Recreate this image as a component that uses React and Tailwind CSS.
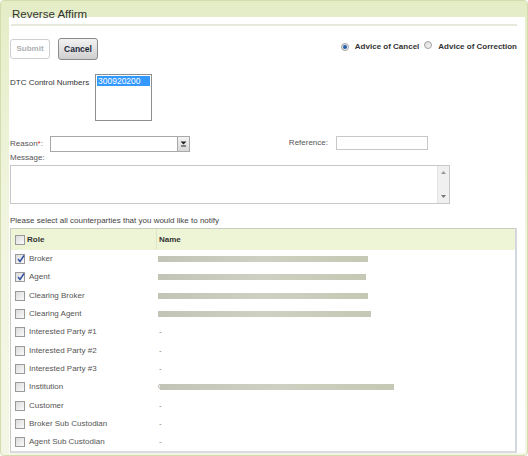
import React from 'react';

const rows = [
  { role: 'Broker', checked: true, bar: 210 },
  { role: 'Agent', checked: true, bar: 208 },
  { role: 'Clearing Broker', checked: false, bar: 210 },
  { role: 'Clearing Agent', checked: false, bar: 213 },
  { role: 'Interested Party #1', checked: false },
  { role: 'Interested Party #2', checked: false },
  { role: 'Interested Party #3', checked: false },
  { role: 'Institution', checked: false, bar: 234, zero: true },
  { role: 'Customer', checked: false },
  { role: 'Broker Sub Custodian', checked: false },
  { role: 'Agent Sub Custodian', checked: false },
];

// old-style grey checkbox
const Check = ({ checked }) => (
  <span className="relative inline-block w-[10px] h-[10px] border border-[#9a9a9a] bg-gradient-to-br from-[#dcdcdc] to-[#fafafa] shrink-0">
    {checked && (
      <svg className="absolute left-[0px] top-[-1px]" width="10" height="10" viewBox="0 0 10 10">
        <path d="M2 5 L4 7.5 L8 1.5" fill="none" stroke="#2d4fa3" strokeWidth="1.4" />
      </svg>
    )}
  </span>
);

const Radio = ({ on }) => (
  <span className="inline-flex items-center justify-center w-[8px] h-[8px] rounded-full border border-[#a0a0a0] bg-gradient-to-br from-[#d8d8d8] to-[#f8f8f8] shrink-0">
    {on && <span className="w-[4px] h-[4px] rounded-full bg-[#1e5fa8]" />}
  </span>
);

const Bar = ({ width }) => (
  <span
    className="block h-[6px] bg-gradient-to-r from-[#c2c5b6] via-[#ced1c1] to-[#c4c8b4]"
    style={{ width }}
  />
);

export default function App() {
  return (
    <div className="w-[528px] h-[456px] bg-white text-[8px] text-[#444] font-['Liberation_Sans',Arial,sans-serif]">
      <div className="h-[456px] rounded-[4px] border border-[#d3dcae] bg-gradient-to-b from-[#e4edc6] via-[#f1f5e0] to-[#f3f6e4] flex flex-col">
        <div className="ml-[8px] mr-[2px] mt-[16px] mb-[4px] bg-white flex-1 pl-[1px] pr-[8px] flex flex-col">
          {/* Title */}
          <div className="-mt-[10px] ml-[1px] border-b-2 border-[#e5eadb] pb-[3px]">
            <h1 className="text-[11.5px] leading-[14px] text-[#333] pl-[1px]">Reverse Affirm</h1>
          </div>

          {/* Buttons + radios */}
          <div className="flex items-center mt-[12px] h-[22px]">
            <button className="h-[20px] w-[40px] border border-[#cfcfcf] rounded-[3px] bg-white text-[#b0b0b0] font-bold text-[8px]">
              Submit
            </button>
            <button className="ml-[8px] h-[22px] w-[40px] border border-[#8a8a8a] rounded-[3px] bg-gradient-to-b from-[#f2f2f2] to-[#cfcfcf] text-[#1c2a3a] font-bold text-[8.5px]">
              Cancel
            </button>
            <div className="ml-auto flex items-center -mt-[5px] font-bold text-[8px] text-[#333]">
              <Radio on />
              <span className="ml-[6px]">Advice of Cancel</span>
              <span className="ml-[5px]"><Radio /></span>
              <span className="ml-[6px]">Advice of Correction</span>
            </div>
          </div>

          {/* DTC */}
          <div className="flex mt-[14px]">
            <span className="w-[85px] whitespace-nowrap text-[8px] text-[#333] pt-[3px]">DTC Control Numbers</span>
            <div className="w-[57px] h-[47px] border border-[#8e8e8e] p-px">
              <div className="bg-[#3399ff] text-white text-[8.5px] leading-[10px] pl-[1px]">300920200</div>
            </div>
          </div>

          {/* Reason + Reference */}
          <div className="flex items-center mt-[15px] h-[16px]">
            <span className="w-[40px] text-[8px] text-[#555]">
              Reason<span className="text-[#e02020]">*</span>:
            </span>
            <div className="w-[140px] h-[16px] border border-[#a8a8a8] flex justify-end">
              <div className="w-[12px] h-full border-l border-[#a8a8a8] bg-gradient-to-b from-[#f4f4f4] to-[#d8d8d8] flex items-center justify-center">
                <svg width="7" height="6" viewBox="0 0 7 6">
                  <path d="M0.5 0.5 H6.5 L3.5 3.5 Z" fill="#222" />
                  <path d="M1 5 H6" stroke="#222" strokeWidth="1" />
                </svg>
              </div>
            </div>
            <span className="w-[146px] text-right pr-[8px] text-[8px] text-[#555] -mt-[2px]">Reference:</span>
            <div className="w-[92px] h-[14px] border border-[#c8c8c8] -mt-[2px]" />
          </div>

          {/* Message */}
          <div className="mt-[1px] text-[8px] text-[#555] leading-[10px]">Message:</div>
          <div className="mt-[2px] w-[440px] h-[39px] border border-[#c8c8c8] flex justify-end">
            <div className="w-[12px] h-full bg-[#f0f0f0] border-l border-[#e2e2e2] flex flex-col justify-between items-center py-[5px]">
              <svg width="5" height="3" viewBox="0 0 5 3"><path d="M0 3 L2.5 0 L5 3 Z" fill="#999" /></svg>
              <svg width="5" height="3" viewBox="0 0 5 3"><path d="M0 0 L5 0 L2.5 3 Z" fill="#777" /></svg>
            </div>
          </div>

          <div className="mt-[12px] text-[8px] text-[#444] leading-[10px]">
            Please select all counterparties that you would like to notify
          </div>

          {/* Table */}
          <div className="mt-[2px] w-[507px] border border-[#c9ccc2] border-r-2 border-r-[#d4d7de] border-b-2 border-b-[#d9dbe0]">
            <div className="flex h-[21px] bg-[#eef5d6] font-bold text-[8px] text-[#333]">
              <div className="w-[146px] flex items-center pl-[4px] border-r border-[#dfe6c8]">
                <Check />
                <span className="ml-[2px]">Role</span>
              </div>
              <div className="flex items-center pl-[2px]">Name</div>
            </div>
            {rows.map((r) => (
              <div key={r.role} className="flex h-[18.3px] items-center text-[8px] text-[#555]">
                <div className="w-[146px] flex items-center pl-[4px]">
                  <Check checked={r.checked} />
                  <span className="ml-[4px]">{r.role}</span>
                </div>
                <div className="flex items-center pl-[1px]">
                  {r.zero && <span className="text-[#999] text-[8px] -mr-[2px]">0</span>}
                  {r.bar ? <Bar width={r.bar} /> : <span className="pl-[1px] text-[#777]">-</span>}
                </div>
              </div>
            ))}
          </div>
        </div>
      </div>
    </div>
  );
}
